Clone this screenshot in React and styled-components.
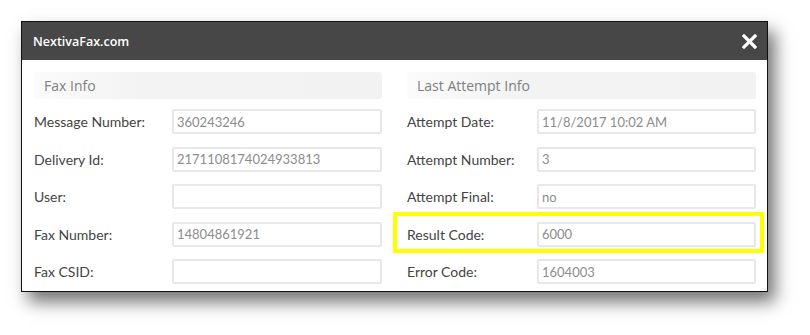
import React from 'react';
import styled, {createGlobalStyle} from 'styled-components';

const GlobalStyle = createGlobalStyle`
  html, body {
    margin: 0;
    padding: 0;
    background: #ffffff;
  }
  body {
    font-family: Lato, "Open Sans", Arial, sans-serif;
  }
`

const Page = styled.div`
  width: 810px;
  height: 335px;
  box-sizing: border-box;
  padding: 21px 0 0 21px;
`

const Window = styled.div`
  width: 747px;
  height: 271px;
  box-sizing: border-box;
  border: 1px solid #111;
  background: #fff;
  box-shadow: 7px 10px 16px rgba(0, 0, 0, 0.55);
  display: flex;
  flex-direction: column;
`

const TitleBar = styled.div`
  height: 38px;
  background: #474747;
  display: flex;
  align-items: center;
  justify-content: space-between;
  padding: 0 10px 0 11px;
`

const Title = styled.span`
  font-family: "Open Sans", Arial, sans-serif;
  font-size: 12.5px;
  font-weight: 600;
  color: #fff;
`

const CloseButton = styled.button`
  border: 0;
  background: none;
  padding: 0;
  width: 16px;
  height: 16px;
  display: flex;
  align-items: center;
  justify-content: center;
  cursor: pointer;
`

const Body = styled.div`
  display: grid;
  grid-template-columns: 348px 349px;
  column-gap: 25px;
  padding: 12px 11px 0 12px;
`

const Column = styled.div`
  display: flex;
  flex-direction: column;
`

const SectionHeader = styled.div`
  height: 27px;
  border-radius: 3px;
  background: linear-gradient(to right, #fbfbfb 0%, #f3f3f3 30%, #f2f2f2 100%);
  display: flex;
  align-items: center;
  padding-left: 10px;
  margin-bottom: 10px;
  font-family: "Open Sans", Arial, sans-serif;
  font-size: 14px;
  color: #808080;
`

const Rows = styled.div`
  display: flex;
  flex-direction: column;
  gap: 12.5px;
`

const Row = styled.div`
  position: relative;
  display: grid;
  grid-template-columns: ${props => props.labelWidth}px 1fr;
  align-items: center;
`

const Label = styled.label`
  font-size: 14px;
  color: #444;
`

const Field = styled.div`
  height: 25px;
  box-sizing: border-box;
  border: 2px solid #e8e8e8;
  border-radius: 2px;
  display: flex;
  align-items: center;
  padding-left: 3px;
  font-size: 13px;
  color: #8c8c8c;
`

const Highlight = styled.div`
  position: absolute;
  top: -10px;
  bottom: -6px;
  left: -14px;
  right: -8px;
  border: 4px solid #ffff00;
  pointer-events: none;
`

const faxInfo = [
    ['Message Number:', '360243246'],
    ['Delivery Id:', '2171108174024933813'],
    ['User:', ''],
    ['Fax Number:', '14804861921'],
    ['Fax CSID:', ''],
]

const attemptInfo = [
    ['Attempt Date:', '11/8/2017 10:02 AM'],
    ['Attempt Number:', '3'],
    ['Attempt Final:', 'no'],
    ['Result Code:', '6000', true],
    ['Error Code:', '1604003'],
]

const Section = ({title, rows, labelWidth}) => (
    <Column>
        <SectionHeader>{title}</SectionHeader>
        <Rows>
            {rows.map(([label, value, marked]) => (
                <Row key={label} labelWidth={labelWidth}>
                    <Label>{label}</Label>
                    <Field>{value}</Field>
                    {marked && <Highlight/>}
                </Row>
            ))}
        </Rows>
    </Column>
)

const App = () => {
    return (
        <Page>
            <GlobalStyle/>
            <Window>
                <TitleBar>
                    <Title>NextivaFax.com</Title>
                    <CloseButton aria-label="close">
                        <svg width="15" height="15" viewBox="0 0 15 15">
                            <path d="M2 2 L13 13 M13 2 L2 13" stroke="#fff" strokeWidth="3.2" strokeLinecap="square"/>
                        </svg>
                    </CloseButton>
                </TitleBar>
                <Body>
                    <Section title="Fax Info" rows={faxInfo} labelWidth={138}/>
                    <Section title="Last Attempt Info" rows={attemptInfo} labelWidth={130}/>
                </Body>
            </Window>
        </Page>
    );
};

export default App;
